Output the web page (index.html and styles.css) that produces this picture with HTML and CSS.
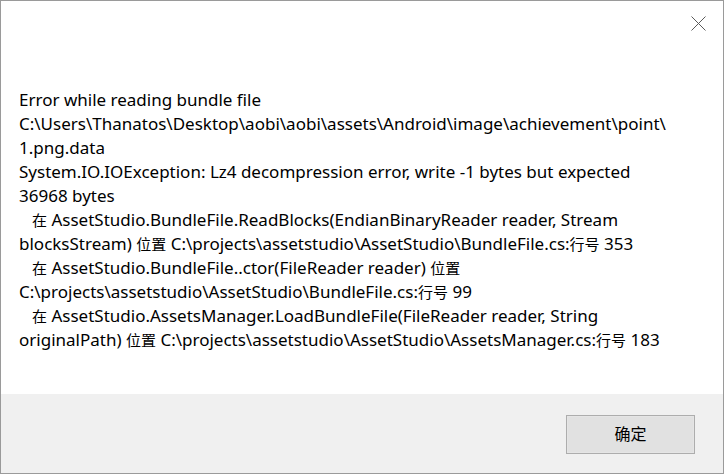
FILE: index.html
```html
<!DOCTYPE html>
<html>
<head>
<meta charset="utf-8">
<link rel="stylesheet" href="styles.css">
</head>
<body>
<div class="dialog">
  <div class="content">
    <div class="titlebar">
      <span class="close" aria-label="关闭">
        <svg width="15" height="15" viewBox="0 0 15 15"><path d="M0.5 0.5L14.5 14.5M14.5 0.5L0.5 14.5" stroke="#5a5a5a" stroke-width="1" fill="none"/></svg>
      </span>
    </div>
    <div class="message">
      <div class="line">Error while reading bundle file</div>
      <div class="line">C:\Users\Thanatos\Desktop\aobi\aobi\assets\Android\image\achievement\point\</div>
      <div class="line">1.png.data</div>
      <div class="line">System.IO.IOException: Lz4 decompression error, write -1 bytes but expected</div>
      <div class="line">36968 bytes</div>
      <div class="line indent"><span class="cjk">在</span> AssetStudio.BundleFile.ReadBlocks(EndianBinaryReader reader, Stream</div>
      <div class="line">blocksStream) <span class="cjk">位置</span> C:\projects\assetstudio\AssetStudio\BundleFile.cs:<span class="cjk">行号</span> 353</div>
      <div class="line indent"><span class="cjk">在</span> AssetStudio.BundleFile..ctor(FileReader reader) <span class="cjk">位置</span></div>
      <div class="line">C:\projects\assetstudio\AssetStudio\BundleFile.cs:<span class="cjk">行号</span> 99</div>
      <div class="line indent"><span class="cjk">在</span> AssetStudio.AssetsManager.LoadBundleFile(FileReader reader, String</div>
      <div class="line">originalPath) <span class="cjk">位置</span> C:\projects\assetstudio\AssetStudio\AssetsManager.cs:<span class="cjk">行号</span> 183</div>
    </div>
  </div>
  <div class="footer">
    <button class="btn">确定</button>
  </div>
</div>
</body>
</html>
```
FILE: styles.css
```css
html, body {
  margin: 0;
  padding: 0;
  background: #ffffff;
}
.dialog {
  width: 724px;
  height: 474px;
  box-sizing: border-box;
  border: 1px solid #9a9a9a;
  display: flex;
  flex-direction: column;
  font-family: "Noto Sans", "Noto Sans CJK SC", sans-serif;
  font-size: 17px;
  color: #000;
}
.content {
  flex: 1;
  background: #fff;
  display: flex;
  flex-direction: column;
}
.titlebar {
  display: flex;
  justify-content: flex-end;
  padding: 15px 17px 0 0;
  height: 15px;
}
.close {
  display: block;
  width: 15px;
  height: 15px;
}
.close svg { display: block; }
.message {
  padding: 57px 0 0 18px;
}
.line {
  height: 24px;
  line-height: 24px;
  white-space: pre;
}
.indent { padding-left: 13px; }
.cjk {
  font-family: "Noto Sans CJK SC", sans-serif;
  font-size: 15px;
}
.footer {
  height: 79px;
  background: #f0f0f0;
  display: flex;
  justify-content: flex-end;
  align-items: flex-start;
  padding: 21px 28px 0 0;
  box-sizing: border-box;
}
.btn {
  width: 129px;
  height: 39px;
  background: #e1e1e1;
  border: 1px solid #adadad;
  box-shadow: inset 0 0 0 1px #e5e5e5;
  font-family: "Noto Sans CJK SC", sans-serif;
  font-size: 16px;
  line-height: 1;
  color: #000;
  padding: 0 0 4px 0;
  margin: 0;
}
```
